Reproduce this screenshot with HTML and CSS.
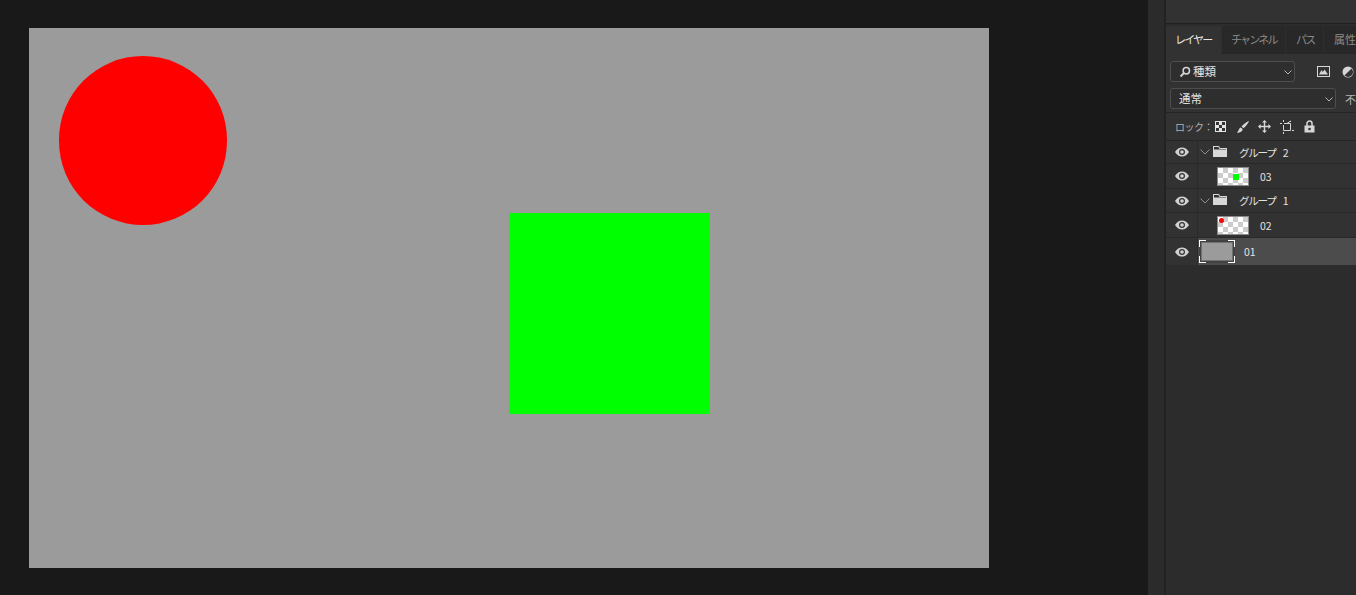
FILE: index.html
```html
<!DOCTYPE html>
<html lang="ja">
<head>
<meta charset="utf-8">
<title>レイヤー</title>
<link rel="stylesheet" href="styles.css">
</head>
<body>
<div class="app">
  <main class="stage">
    <div class="canvas">
      <div class="circle"></div>
      <div class="square"></div>
    </div>
  </main>
  <div class="strip"></div>
  <aside class="panel">
    <div class="topbar"></div>
    <div class="tabs">
      <div class="tab active">レイヤー</div>
      <div class="tab t2">チャンネル</div>
      <div class="tab t3">パス</div>
      <div class="tab t4">属性</div>
    </div>
    <div class="filter-row">
      <div class="select s-filter">
        <svg class="ico search" viewBox="0 0 12 12"><circle cx="7.3" cy="4.7" r="3.2" fill="none" stroke="#d6d6d6" stroke-width="1.5"/><path d="M5 7 1.5 10.500" stroke="#d6d6d6" stroke-width="1.800"/></svg>
        <span class="sel-text">種類</span>
        <svg class="chev" viewBox="0 0 8 5"><path d="M.5.5 4 4 7.500.5" fill="none" stroke="#b5b5b5"/></svg>
      </div>
      <svg class="ico f-image" viewBox="0 0 13 11"><rect x=".5" y=".5" width="12" height="10" fill="none" stroke="#d6d6d6"/><path d="M2 8.500 4.500 4l1.300 2L7.500 3.500l3.500 5z" fill="#d6d6d6"/></svg>
      <svg class="ico f-adjust" viewBox="0 0 12 12"><circle cx="6" cy="6" r="5.500" fill="#d6d6d6"/><path d="M9.600 2.400A5 5 0 0 1 2.400 9.600z" fill="#333"/></svg>
    </div>
    <div class="blend-row">
      <div class="select s-blend">
        <span class="sel-text sel-blend">通常</span>
        <svg class="chev" viewBox="0 0 8 5"><path d="M.5.5 4 4 7.500.5" fill="none" stroke="#b5b5b5"/></svg>
      </div>
      <span class="opacity">不透明度</span>
    </div>
    <div class="lock-row">
      <span class="lock-label">ロック：</span>
      <svg class="ico l-check" viewBox="0 0 11 11"><rect width="11" height="11" fill="#e4e4e4"/><path d="M1 1h3v3H1zM7 1h3v3H7zM4 4h3v3H4zM1 7h3v3H1zM7 7h3v3H7z" fill="#333"/></svg>
      <svg class="ico l-brush" viewBox="0 0 14 14"><path d="M13 1c-2 .6-6 3.400-7.400 5.600l1.800 1.700C9.800 6.500 12.400 3 13 1zM4.800 7.400C2.800 7.600 3.200 10.800.8 12.500c3 .8 6-.8 5.800-3.400z" fill="#d6d6d6"/></svg>
      <svg class="ico l-move" viewBox="0 0 13 13"><path d="M6.500 1v11M1 6.500h11" stroke="#d6d6d6" stroke-width="1.400"/><path d="M6.500 0 9 2.600H4zM6.500 13 4 10.400h5zM0 6.500 2.600 4v5zM13 6.500 10.400 9V4z" fill="#d6d6d6"/></svg>
      <svg class="ico l-crop" viewBox="0 0 14 14"><path d="M0 3.500h2M4 3.500h6.500v7h-7V5M3.500 0v2M3.500 12v2M12 10.500h2M10.500 2V1" fill="none" stroke="#d6d6d6"/><path d="M7 3.500 10.500 1" stroke="#d6d6d6"/></svg>
      <svg class="ico l-lock" viewBox="0 0 11 13"><path d="M3 6V3.500a2.500 2.500 0 0 1 5 0V6" fill="none" stroke="#d6d6d6" stroke-width="1.500"/><path d="M.5 5.500h10v7H.5z" fill="#d6d6d6"/><circle cx="5.500" cy="9" r="1.300" fill="#333"/></svg>
    </div>
    <div class="layers">
      <div class="layer r-top">
        <div class="eye-col"><svg class="eye" viewBox="0 0 14 10"><path d="M0 5c2-3.200 4.300-4.600 7-4.600S12 1.800 14 5c-2 3.200-4.300 4.600-7 4.600S2 8.200 0 5z" fill="#d2d2d2"/><circle cx="7" cy="5" r="3" fill="#333"/><circle cx="7" cy="5" r="1.800" fill="#d2d2d2"/></svg></div>
        <svg class="twist" viewBox="0 0 10 6"><path d="M.5.5 5 5 9.500.5" fill="none" stroke="#8f8f8f"/></svg>
        <svg class="folder" viewBox="0 0 14 11"><path d="M0 0h6l1 2h7v9H0z" fill="#d8d8d8"/><path d="M1 1h4.500l1 2H13v.6H1z" fill="#333"/></svg>
        <span class="name gname">グループ 2</span>
      </div>
      <div class="layer r-leaf">
        <div class="eye-col"><svg class="eye" viewBox="0 0 14 10"><path d="M0 5c2-3.200 4.300-4.600 7-4.600S12 1.800 14 5c-2 3.200-4.300 4.600-7 4.600S2 8.200 0 5z" fill="#d2d2d2"/><circle cx="7" cy="5" r="3" fill="#333"/><circle cx="7" cy="5" r="1.800" fill="#d2d2d2"/></svg></div>
        <div class="thumb"><span class="dot-green"></span></div>
        <span class="name lname">03</span>
      </div>
      <div class="layer r-group">
        <div class="eye-col"><svg class="eye" viewBox="0 0 14 10"><path d="M0 5c2-3.200 4.300-4.600 7-4.600S12 1.800 14 5c-2 3.200-4.300 4.600-7 4.600S2 8.200 0 5z" fill="#d2d2d2"/><circle cx="7" cy="5" r="3" fill="#333"/><circle cx="7" cy="5" r="1.800" fill="#d2d2d2"/></svg></div>
        <svg class="twist" viewBox="0 0 10 6"><path d="M.5.5 5 5 9.500.5" fill="none" stroke="#8f8f8f"/></svg>
        <svg class="folder" viewBox="0 0 14 11"><path d="M0 0h6l1 2h7v9H0z" fill="#d8d8d8"/><path d="M1 1h4.500l1 2H13v.6H1z" fill="#333"/></svg>
        <span class="name gname">グループ 1</span>
      </div>
      <div class="layer r-leaf">
        <div class="eye-col"><svg class="eye" viewBox="0 0 14 10"><path d="M0 5c2-3.200 4.300-4.600 7-4.600S12 1.800 14 5c-2 3.200-4.300 4.600-7 4.600S2 8.200 0 5z" fill="#d2d2d2"/><circle cx="7" cy="5" r="3" fill="#333"/><circle cx="7" cy="5" r="1.800" fill="#d2d2d2"/></svg></div>
        <div class="thumb"><span class="dot-red"></span></div>
        <span class="name lname">02</span>
      </div>
      <div class="layer selected">
        <div class="eye-col"><svg class="eye" viewBox="0 0 14 10"><path d="M0 5c2-3.200 4.300-4.600 7-4.600S12 1.800 14 5c-2 3.200-4.300 4.600-7 4.600S2 8.200 0 5z" fill="#d2d2d2"/><circle cx="7" cy="5" r="3" fill="#333"/><circle cx="7" cy="5" r="1.800" fill="#d2d2d2"/></svg></div>
        <div class="sel-thumb"><div class="sel-inner"></div></div>
        <span class="name sname">01</span>
      </div>
    </div>
  </aside>
</div>
</body>
</html>
```
FILE: styles.css
```css
* { box-sizing: border-box; }
html, body { margin: 0; height: 100%; overflow: hidden; background: #191919; }
body { font-family: "Noto Sans CJK JP", "Noto Sans", sans-serif; font-size: 11px; color: #d6d6d6; }
svg { display: block; flex: none; }
.app { display: flex; width: 1356px; height: 595px; }
.stage { width: 1148px; height: 595px; padding: 28px 0 0 29px; background: #191919; flex: none; }
.canvas { position: relative; width: 960px; height: 540px; background: #9b9b9b; }
.circle { position: absolute; left: 29.500px; top: 28px; width: 168.500px; height: 168.500px; border-radius: 50%; background: #f00; }
.square { position: absolute; left: 480px; top: 185px; width: 201px; height: 201px; background: #0f0; }
.strip { width: 18px; height: 595px; background: #2b2b2b; border-right: 2px solid #222; flex: none; }
.panel { width: 190px; height: 595px; background: #2c2c2c; flex: none; overflow: hidden; }
.topbar { height: 24px; background: #323232; border-bottom: 1px solid #1f1f1f; }
.tabs { display: flex; height: 28px; margin-top: 2px; background: #262626; }
.tab { height: 27px; line-height: 26px; padding-left: 10px; color: #8c8c8c; border-right: 1px solid #2e2e2e; white-space: nowrap; flex: none; background: #282828; overflow: hidden; letter-spacing: -1.800px; }
.tab.active { width: 56px; height: 28px; padding-left: 9px; color: #e6e6e6; background: #323232; }
.t2 { width: 64px; padding-left: 9px; }
.t3 { width: 38px; }
.t4 { width: 60px; letter-spacing: 0; }
.filter-row { display: flex; align-items: center; height: 31px; padding: 7px 0 3px 4px; background: #323232; }
.select { display: flex; align-items: center; flex: none; height: 21px; border: 1px solid #4d4d4d; border-radius: 3px; background: #2e2e2e; color: #e2e2e2; position: relative; padding-left: 8px; }
.s-filter { width: 125px; }
.s-blend { width: 166px; }
.search { width: 12px; height: 12px; margin-right: 2px; }
.sel-text { line-height: 19px; font-size: 11.500px; }
.chev { position: absolute; right: 2px; top: 8px; width: 8px; height: 5px; }
.f-image { width: 13px; height: 11px; margin-left: 22px; }
.f-adjust { width: 12px; height: 12px; margin-left: 12px; }
.blend-row { display: flex; align-items: center; height: 27px; padding: 3px 0 3px 4px; background: #323232; white-space: nowrap; }
.opacity { margin-left: 9px; color: #b5b5b5; }
.lock-row { display: flex; align-items: center; height: 29px; padding: 0 0 0 9px; background: #323232; border-top: 1px solid #262626; border-bottom: 1px solid #262626; }
.lock-label { width: 40px; font-size: 10px; color: #b0b0b0; white-space: nowrap; letter-spacing: -.5px; }
.l-check { width: 11px; height: 11px; }
.l-brush { width: 14px; height: 14px; margin-left: 10px; }
.l-move { width: 13px; height: 13px; margin-left: 8px; }
.l-crop { width: 14px; height: 14px; margin-left: 9px; }
.l-lock { width: 11px; height: 13px; margin-left: 10px; }
.layers { background: #323232; }
.layer { display: flex; align-items: center; border-bottom: 1px solid #282828; background: #323232; }
.r-top { height: 23px; }
.r-leaf { height: 25px; }
.r-group { height: 24px; }
.eye-col { width: 32px; align-self: stretch; display: flex; align-items: center; justify-content: center; border-right: 1px solid #2a2a2a; flex: none; padding-left: 1px; }
.eye { width: 14px; height: 10px; }
.twist { width: 10px; height: 6px; margin-left: 2px; }
.folder { width: 14px; height: 11px; margin-left: 3px; margin-top: -2px; }
.name { color: #e2e2e2; white-space: nowrap; font-size: 10.500px; }
.gname { margin-left: 12px; letter-spacing: -1.200px; word-spacing: 6px; }
.lname { margin-left: 11px; }
.sname { margin-left: 9px; }
.thumb { position: relative; width: 32px; height: 19px; margin-left: 19px; border: 1px solid #8a8a8a; background: repeating-conic-gradient(#ccc 0 25%, #fff 0 50%) 0 0 / 10px 10px; }
.dot-green { position: absolute; left: 15px; top: 6px; width: 6px; height: 6px; background: #0f0; }
.dot-red { position: absolute; left: 1px; top: 1px; width: 5px; height: 5px; border-radius: 50%; background: #f00; }
.selected { height: 27px; background: #4c4c4c; border-bottom: 0; }
.selected .eye-col { background: #323232; }
.sel-thumb { width: 36px; height: 23px; margin-left: 1px; padding: 2px; background:
  linear-gradient(#fff,#fff) 0 0/7px 1px no-repeat, linear-gradient(#fff,#fff) 0 0/1px 7px no-repeat,
  linear-gradient(#fff,#fff) 100% 0/7px 1px no-repeat, linear-gradient(#fff,#fff) 100% 0/1px 7px no-repeat,
  linear-gradient(#fff,#fff) 0 100%/7px 1px no-repeat, linear-gradient(#fff,#fff) 0 100%/1px 7px no-repeat,
  linear-gradient(#fff,#fff) 100% 100%/7px 1px no-repeat, linear-gradient(#fff,#fff) 100% 100%/1px 7px no-repeat,
  #424242; }
.sel-inner { width: 100%; height: 100%; background: #9b9b9b; border: 1px solid #707070; }
```
